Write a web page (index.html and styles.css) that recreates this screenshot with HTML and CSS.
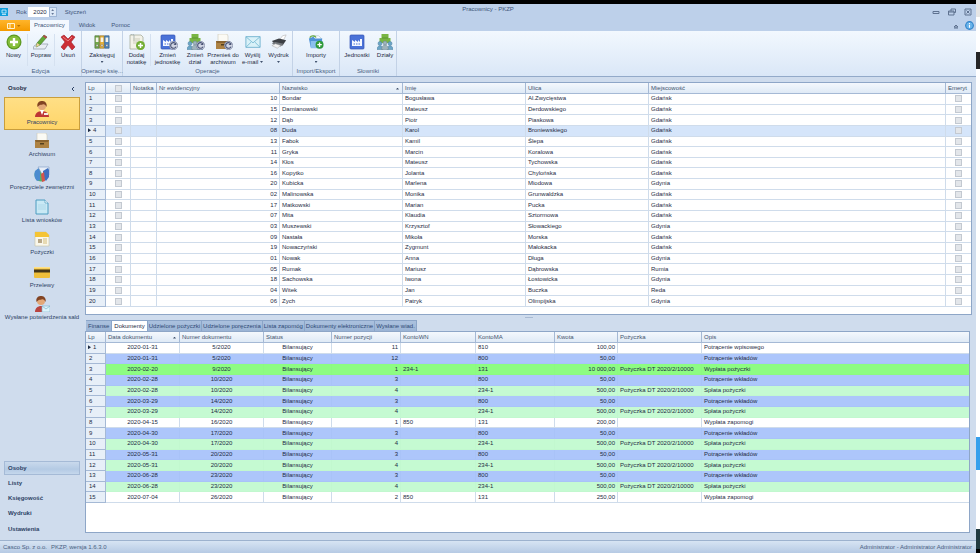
FILE: index.html
```html
<!DOCTYPE html>
<html lang="pl">
<head>
  <meta charset="UTF-8">
  <meta name="viewport" content="width=device-width, initial-scale=1.0">
  <title>Pracownicy - PKZP</title>
  <link rel="stylesheet" href="styles.css">
</head>
<body>

<!-- Icon set -->
<svg class="sprite" aria-hidden="true">
  <symbol id="i-add" viewBox="0 0 16 16"><circle cx="8" cy="8" r="7.5" fill="#5d9a22"/><circle cx="8" cy="8" r="6.2" fill="#86bf3c"/><path d="M8 4v8M4 8h8" stroke="#fff" stroke-width="2.4"/></symbol>
  <symbol id="i-edit" viewBox="0 0 16 16"><path d="M1 12l3-2h11l-3 5H0z" fill="#e8edf4" stroke="#8c99a8" stroke-width=".7"/><path d="M4 9l7-8 3 2-7 8-4 2z" fill="#62a835" stroke="#39701f" stroke-width=".6"/><path d="M11 1l3 2-1 1.5-3-2z" fill="#b9444e"/><path d="M3 13l1-4 3 2z" fill="#f0d09a"/></symbol>
  <symbol id="i-del" viewBox="0 0 16 16"><path d="M1 3l3-2 4 4 4-4 3 2-4 5 4 5-3 3-4-5-4 5-3-3 4-5z" fill="#cc2f35" stroke="#9d1f28" stroke-width=".6"/><path d="M3 3l5 4 4-4" fill="none" stroke="#ec8080"/></symbol>
  <symbol id="i-books" viewBox="0 0 18 16"><path d="M1 1h5v14H1z" fill="#73a84b" stroke="#456a36" stroke-width=".7"/><path d="M6.500 1h5v14h-5z" fill="#e5b13c" stroke="#8d6d28" stroke-width=".7"/><path d="M12 1h5v14h-5z" fill="#4e86bd" stroke="#2e557d" stroke-width=".7"/><path d="M2 3h3v5H2zM7.500 3h3v5h-3zM13 3h3v5h-3z" fill="#f6f4ea"/><g fill="#fff" stroke="#555" stroke-width=".5"><circle cx="3.500" cy="12" r="1.100"/><circle cx="9" cy="12" r="1.100"/><circle cx="14.500" cy="12" r="1.100"/></g></symbol>
  <symbol id="i-note" viewBox="0 0 16 16"><path d="M1 1h11l2 2v12H1z" fill="#f3f2e8" stroke="#a7ad9c" stroke-width=".8"/><path d="M2 1c1-2 3-1 3 1v5" fill="none" stroke="#9aa" stroke-width=".8"/><path d="M4 5h7M4 7h7M4 9h4" stroke="#cdcdbb"/><circle cx="11.500" cy="11.500" r="4.500" fill="#73ae34"/><path d="M11.500 9v5M9 11.500h5" stroke="#fff" stroke-width="1.500"/></symbol>
  <symbol id="i-unit" viewBox="0 0 16 16"><rect x="1" y="1" width="14" height="14" rx="1" fill="#4a72d8" stroke="#3555b4" stroke-width=".7"/><path d="M3 12V6l3 2V6l3 2V6l2 2V5h2v7z" fill="#f5f8ff"/><path d="M4.500 10h7" stroke="#4a72d8" stroke-dasharray="1.500 1"/></symbol>
  <symbol id="i-refresh" viewBox="0 0 16 16"><circle cx="8" cy="8" r="7.500" fill="#d0d5e3" stroke="#66708e"/><path d="M12 5a5 5 0 1 0 .5 5" fill="none" stroke="#4a5577" stroke-width="2"/><path d="M13 2v5H8z" fill="#4a5577"/></symbol>
  <symbol id="i-people" viewBox="0 0 16 16"><path d="M4.500 0h7v4h2v5h-11V4h2z" fill="#78b544"/><path d="M5 4h6" stroke="#5a9431"/><g fill="#6ba5c7" stroke="#4a7e9f" stroke-width=".5"><circle cx="3" cy="9.500" r="2"/><circle cx="13" cy="9.500" r="2"/><path d="M0 15.500c0-5 6-5 6 0zM10 15.500c0-5 6-5 6 0z"/></g><g fill="#9fb3bb" stroke="#6a8791" stroke-width=".5"><circle cx="8" cy="9" r="2"/><path d="M4.500 15.500c0-6 7-6 7 0z"/></g></symbol>
  <symbol id="i-box" viewBox="0 0 16 16"><path d="M3 0h9l1 2v6H3z" fill="#fbfaf4" stroke="#c9c6b6" stroke-width=".6"/><path d="M1 7h14v8H1z" fill="#ad8243"/><path d="M1 7h14l-1 2H2z" fill="#8a6430"/><path d="M6 10h4v1.500H6z" fill="#54401f"/></symbol>
  <symbol id="i-mail" viewBox="0 0 18 16"><path d="M1 2h16v12H1z" fill="#d9f1f8" stroke="#6eb0cd"/><path d="M1 2l8 7 8-7M1 14l6-6M17 14l-6-6" fill="none" stroke="#79bbd5"/></symbol>
  <symbol id="i-print" viewBox="0 0 18 16"><path d="M10 5l3-4 4-1-3 6z" fill="#fff" stroke="#aaa" stroke-width=".6"/><path d="M1 7l8-3 8 2-4 6-9-2z" fill="#3c3f44"/><path d="M1 9l4-1 9 2-3 3-8-2z" fill="#75797e"/><path d="M1 12l4-2 6 2-4 3z" fill="#f3f3f3" stroke="#999" stroke-width=".5"/></symbol>
  <symbol id="i-import" viewBox="0 0 18 16"><path d="M6 1h6l3 3v6H6z" fill="#f6f9ff" stroke="#8aa" stroke-width=".5"/><path d="M1 4l5-2 2 2h8l-1 10H3z" fill="#4e92d6"/><path d="M3 7h14l-2 8H3z" fill="#8bc0ee"/><path d="M2 3c2-3 6-2 7 0" fill="none" stroke="#65a943" stroke-width="1.500"/><circle cx="13" cy="11" r="4.500" fill="#2f9a39"/><path d="M13 8.500v5M10.500 11h5" stroke="#fff" stroke-width="1.500"/></symbol>
  <symbol id="i-person" viewBox="0 0 16 16"><path d="M1 16c0-8 14-8 14 0z" fill="#bd3535"/><path d="M6 9l2 5 2-5z" fill="#fff"/><circle cx="8" cy="5" r="4" fill="#e3a878"/><path d="M3.500 6c-2-8 11-8 9 0-1-2-2-3-4-2.500s-3 0-5 2.500z" fill="#824423"/><path d="M10 12h4v2h-4z" fill="#f5e9e4"/></symbol>
  <symbol id="i-chart" viewBox="0 0 16 16"><circle cx="7" cy="9" r="6.500" fill="#55b06c"/><path d="M1 5l5-4v13l-3 1C0 12 0 8 1 5z" fill="#4b8bd0"/><path d="M4 1h11v8l-6 1z" fill="#e7eef8" stroke="#7899c2" stroke-width=".6"/><path d="M9 5l5-3 1 2v7l-3 4-3-3z" fill="#3d6fc0"/><path d="M7 8l3-2 1 9-3 1z" fill="#d3554b"/></symbol>
  <symbol id="i-page" viewBox="0 0 16 16"><path d="M2 1h9l3 3v11H2z" fill="#c9e9f5" stroke="#4c9cc0"/><path d="M11 1v3h3" fill="#fff" stroke="#4c9cc0" stroke-width=".7"/><path d="M4 6h8M4 8h8M4 10h8" stroke="#a3d2e5" stroke-width=".7"/></symbol>
  <symbol id="i-loan" viewBox="0 0 16 16"><path d="M1 1h11l3 3v11H1z" fill="#f9f7ec" stroke="#c6c2a5" stroke-width=".6"/><path d="M1 1h11l3 3v2H1z" fill="#f5c434"/><path d="M4 8h4v4H4z" fill="#b9a98a"/><path d="M9 8h4M9 10h4M9 12h4" stroke="#d5bd7a"/></symbol>
  <symbol id="i-card" viewBox="0 0 16 16"><rect x="0" y="3" width="16" height="11" rx="1" fill="#efbf3a"/><path d="M0 5.500h16v3H0z" fill="#453718"/><path d="M0 3h16v1.500H0z" fill="#ffe189"/></symbol>
  <symbol id="i-send" viewBox="0 0 16 16"><path d="M1 16c0-8 12-8 12 0z" fill="#b94440"/><circle cx="7" cy="5" r="4" fill="#e3a878"/><path d="M2.500 6c-2-8 11-8 9 0-1-2-2-3-4-2.500s-3 0-5 2.500z" fill="#824423"/><path d="M8 10h8v6H8z" fill="#ddf3fa" stroke="#7db4cd" stroke-width=".6"/><path d="M8 10l4 3 4-3" fill="none" stroke="#7db4cd" stroke-width=".7"/></symbol>
</svg>

<div class="screen">
  <div class="app">
    <header class="titlebar">
      <svg class="logo" viewBox="0 0 8 8" aria-hidden="true"><path d="M0 0h8v8H0z" fill="#109ddb"/><path d="M2 2h4v3H2zM2 6.500h4" fill="none" stroke="#d6f1ff" stroke-width=".8"/></svg>
      <label for="year">Rok</label>
      <div class="spinner">
        <input id="year" type="text" value="2020">
        <div class="arrows">
          <button aria-label="Następny rok"><svg viewBox="0 0 4 3"><path d="M2 1l1 1H1z"/></svg></button>
          <button aria-label="Poprzedni rok"><svg viewBox="0 0 4 3"><path d="M1 1h2L2 2z"/></svg></button>
        </div>
      </div>
      <span class="month">Styczeń</span>
      <h1>Pracownicy - PKZP</h1>
      <div class="window-buttons">
        <button aria-label="Minimalizuj"><svg viewBox="0 0 8 8"><path d="M1 3.500h6v2H1z"/></svg></button>
        <button aria-label="Przywróć"><svg viewBox="0 0 8 8"><path d="M3 3V1h4.500v3.500H6M.5 3H6v4H.5zM.5 4H6"/></svg></button>
        <button aria-label="Zamknij"><svg viewBox="0 0 8 8"><path d="M1 1h6v6H1zM2.500 2.500l3 3M5.500 2.500l-3 3"/></svg></button>
      </div>
    </header>

    <nav class="menu">
      <button class="file-menu" aria-label="Menu"><svg viewBox="0 0 14 6"><path d="M.5.500h7v5h-7zM3 .5v5" fill="none" stroke="#fff2cf"/><path d="M10 2h3.500l-1.700 2z" fill="#b87408"/></svg></button>
      <button class="active">Pracownicy</button>
      <button>Widok</button>
      <button>Pomoc</button>
      <div class="menu-right">
        <button aria-label="Zwiń wstążkę"><svg viewBox="0 0 8 8"><path d="M2 5l2-2 2 2zM2 6h4"/></svg></button>
        <button aria-label="Informacje"><svg class="info" viewBox="0 0 8 8"><circle cx="4" cy="4" r="3.900" fill="#2f82c9"/><circle cx="4" cy="4" r="2.900" fill="#69b3ea"/><path d="M4 3.300v2.700M4 1.700v.9" stroke="#fff"/></svg></button>
      </div>
    </nav>

    <section class="ribbon">
      <div class="group">
        <div class="tools">
          <button class="tool w-m"><svg><use href="#i-add"/></svg><span>Nowy</span></button>
          <button class="tool w-m line"><svg><use href="#i-edit"/></svg><span>Popraw</span></button>
          <button class="tool w-m line"><svg><use href="#i-del"/></svg><span>Usuń</span></button>
        </div>
        <div class="caption">Edycja</div>
      </div>
      <div class="group">
        <div class="tools">
          <button class="tool w-xl"><svg><use href="#i-books"/></svg><span>Zaksięguj</span><i class="drop"></i></button>
        </div>
        <div class="caption tight">Operacje księ...</div>
      </div>
      <div class="group">
        <div class="tools">
          <button class="tool w-m"><svg><use href="#i-note"/></svg><span>Dodaj<br>notatkę</span></button>
          <button class="tool w-l line"><svg><use href="#i-unit"/></svg><svg class="over"><use href="#i-refresh"/></svg><span>Zmień<br>jednostkę</span></button>
          <button class="tool w-xs"><svg><use href="#i-people"/></svg><svg class="over"><use href="#i-refresh"/></svg><span>Zmień<br>dział</span></button>
          <button class="tool w-l"><svg><use href="#i-box"/></svg><svg class="over"><use href="#i-refresh"/></svg><span>Przenieś do<br>archiwum</span></button>
          <button class="tool w-s"><svg><use href="#i-mail"/></svg><span>Wyślij<br>e-mail <i class="drop inline"></i></span></button>
          <button class="tool w-m"><svg><use href="#i-print"/></svg><span>Wydruk</span><i class="drop"></i></button>
        </div>
        <div class="caption">Operacje</div>
      </div>
      <div class="group">
        <div class="tools">
          <button class="tool w-xxl"><svg><use href="#i-import"/></svg><span>Importy</span><i class="drop"></i></button>
        </div>
        <div class="caption">Import/Eksport</div>
      </div>
      <div class="group">
        <div class="tools">
          <button class="tool w-l"><svg><use href="#i-unit"/></svg><span>Jednostki</span></button>
          <button class="tool w-xs"><svg><use href="#i-people"/></svg><span>Działy</span></button>
        </div>
        <div class="caption">Słowniki</div>
      </div>
    </section>

    <main>
      <aside class="sidebar">
        <h2>Osoby <button aria-label="Zwiń panel"><svg viewBox="0 0 4 6"><path d="M3 1L1 3l2 2" fill="none" stroke="#2d4265"/></svg></button></h2>
        <div class="shortcuts">
          <button class="selected"><svg><use href="#i-person"/></svg>Pracownicy</button>
          <button><svg><use href="#i-box"/></svg>Archiwum</button>
          <button><svg><use href="#i-chart"/></svg>Poręczyciele zewnętrzni</button>
          <button><svg><use href="#i-page"/></svg>Lista wniosków</button>
          <button><svg><use href="#i-loan"/></svg>Pożyczki</button>
          <button><svg><use href="#i-card"/></svg>Przelewy</button>
          <button><svg><use href="#i-send"/></svg>Wysłane potwierdzenia sald</button>
        </div>
        <div class="sections">
          <button class="selected">Osoby</button>
          <button>Listy</button>
          <button>Księgowość</button>
          <button>Wydruki</button>
          <button>Ustawienia</button>
        </div>
      </aside>

      <div class="content">
        <section class="panel people">
          <table>
            <colgroup><col class="c-lp"><col class="c-check"><col class="c-note"><col class="c-text"><col class="c-text"><col class="c-text"><col class="c-text"><col><col class="c-check"></colgroup>
            <thead>
              <tr><th>Lp</th><th class="check"><input type="checkbox" aria-label="Zaznacz wszystkich"></th><th>Notatka</th><th>Nr ewidencyjny</th><th>Nazwisko<i class="sort"></i></th><th>Imię</th><th>Ulica</th><th>Miejscowość</th><th>Emeryt</th></tr>
            </thead>
            <tbody id="people"></tbody>
          </table>
        </section>

        <div class="splitter"></div>

        <div class="tabs">
          <button>Finanse</button>
          <button class="active">Dokumenty</button>
          <button>Udzielone pożyczki</button>
          <button>Udzielone poręczenia</button>
          <button>Lista zapomóg</button>
          <button>Dokumenty elektroniczne</button>
          <button>Wysłane wiad.</button>
        </div>

        <section class="panel documents">
          <table>
            <colgroup><col class="c-lp"><col class="c-date"><col class="c-wide"><col class="c-status"><col class="c-pos"><col class="c-wn"><col class="c-ma"><col class="c-sum"><col class="c-wide"><col></colgroup>
            <thead>
              <tr><th>Lp</th><th>Data dokumentu<i class="sort"></i></th><th>Numer dokumentu</th><th>Status</th><th>Numer pozycji</th><th>KontoWN</th><th>KontoMA</th><th>Kwota</th><th>Pożyczka</th><th>Opis</th></tr>
            </thead>
            <tbody id="documents"></tbody>
          </table>
        </section>
      </div>
    </main>

    <footer class="statusbar">
      <span>Casco Sp. z o.o.</span>
      <span>PKZP, wersja 1.6.3.0</span>
      <span class="user">Administrator - Administrator Administrator</span>
    </footer>
  </div>

  <div class="edge">
    <div class="edge-top"></div>
    <div class="edge-dark"></div>
    <div class="edge-blue"></div>
    <div class="edge-bottom"></div>
  </div>
</div>

<script src="script.js"></script>
</body>
</html>
```
FILE: styles.css
```css
* {
  box-sizing: border-box;
}

body {
  margin: 0;
  font-family: "Liberation Sans", Arial, sans-serif;
  font-size: 6px;
  line-height: 7px;
  color: #1e2c44;
  background: #000;
}

button,
input {
  margin: 0;
  padding: 0;
  border: 0;
  background: none;
  font: inherit;
  color: inherit;
}

button {
  cursor: pointer;
  white-space: nowrap;
}

.sprite {
  display: none;
}

.screen {
  display: flex;
  height: 100vh;
}

.app {
  flex: 1;
  min-width: 0;
  display: flex;
  flex-direction: column;
  margin-top: 4px;
  background: #cfdced;
}

/* Title bar */
.titlebar {
  position: relative;
  display: flex;
  align-items: center;
  height: 16px;
  background: #bdd0ea;
  color: #40557a;
}

.logo {
  width: 8px;
  height: 8px;
  margin-right: 8px;
}

.spinner {
  display: flex;
  height: 10px;
  margin: 0 8px 0 1px;
}

.spinner input {
  width: 21px;
  padding-right: 2px;
  background: #fff;
  color: #1e2c44;
  text-align: right;
}

.arrows {
  display: flex;
  flex-direction: column;
  width: 8px;
  border: 1px solid #9fb6d6;
  background: #dce8f7;
}

.arrows button {
  height: 4px;
}

.arrows svg {
  display: block;
  height: 4px;
  margin: 0 auto;
  fill: #40557a;
}

h1 {
  position: absolute;
  left: 0;
  right: 0;
  top: 2px;
  margin: 0;
  font-size: 6px;
  font-weight: normal;
  text-align: center;
  pointer-events: none;
}

.window-buttons {
  display: flex;
  gap: 8px;
  margin-left: auto;
  padding-right: 4px;
}

.window-buttons svg,
.menu-right svg {
  display: block;
  width: 8px;
  height: 8px;
  fill: none;
}

.window-buttons path,
.menu-right path {
  stroke: #5f7290;
  stroke-width: 1;
}

/* Menu */
.menu {
  display: flex;
  height: 11px;
  background: #bdd0ea;
  color: #40557a;
}

.menu button {
  padding: 0 8px;
}

.menu .file-menu {
  width: 30px;
  padding: 0 7px;
  background: linear-gradient(#ffb52b, #f49a00);
}

.file-menu svg {
  display: block;
  height: 6px;
}

.menu .active {
  padding: 0 4px;
  margin-right: 2px;
  background: #f3f8fe;
}

.menu-right {
  display: flex;
  align-items: center;
  gap: 5px;
  margin-left: auto;
  padding-right: 2px;
}

.menu .menu-right button {
  padding: 0;
}

.menu-right .info {
  width: 9px;
  height: 9px;
}

.menu-right .info path {
  stroke: #fff;
}

/* Ribbon */
.ribbon {
  display: flex;
  height: 46px;
  border-bottom: 1px solid #93aac9;
  background: linear-gradient(#f2f8fe, #dae7f7);
}

.group {
  display: flex;
  flex-direction: column;
  justify-content: space-between;
  border-right: 1px solid #c3d2e6;
}

.tools {
  display: flex;
  padding-top: 3px;
}

.tool {
  position: relative;
  display: flex;
  flex-direction: column;
  align-items: center;
  justify-content: flex-start;
  height: 32px;
  text-align: center;
}

.tool svg {
  flex: none;
  width: 16px;
  height: 16px;
  margin-bottom: 2px;
}

.tool .over {
  position: absolute;
  left: calc(50% + 1px);
  top: 7px;
  width: 9px;
  height: 9px;
}

.tool.line {
  border-left: 1px solid #d5e1f0;
}

.w-xs { width: 22px; }
.w-s { width: 25px; }
.w-m { width: 27px; }
.w-l { width: 34px; }
.w-xl { width: 40px; }
.w-xxl { width: 46px; }

.drop,
.sort {
  display: block;
  width: 3px;
  height: 2px;
  margin-top: 2px;
  background: #42536e;
  clip-path: polygon(0 0, 100% 0, 50% 100%);
}

.drop.inline {
  display: inline-block;
  margin: 0 0 1px;
}

.caption {
  padding-bottom: 1px;
  color: #4a5f82;
  text-align: center;
  white-space: nowrap;
}

.caption.tight {
  margin: 0 -2px;
}

/* Main area */
main {
  flex: 1;
  min-height: 0;
  display: flex;
  padding: 5px 4px 0;
}

.sidebar {
  display: flex;
  flex-direction: column;
  width: 76px;
  margin-right: 5px;
}

.sidebar h2 {
  display: flex;
  justify-content: space-between;
  margin: 0;
  padding: 3px 5px 5px 4px;
  font-size: 6px;
}

.sidebar h2 svg {
  display: block;
  width: 4px;
  height: 6px;
}

.sidebar button {
  color: #2d4265;
}

.shortcuts {
  display: flex;
  flex-direction: column;
  height: 228px;
}

.shortcuts button {
  flex: 1;
  display: flex;
  flex-direction: column;
  align-items: center;
  justify-content: center;
  gap: 2px;
  border: 1px solid transparent;
}

.shortcuts svg {
  width: 16px;
  height: 16px;
}

.shortcuts .selected {
  border-color: #c99e3c;
  background: linear-gradient(#ffdf86, #ffd568);
}

.sections {
  display: flex;
  flex-direction: column;
  justify-content: space-between;
  height: 75px;
  margin: auto 0 4px;
}

.sections button {
  height: 14px;
  padding-left: 3px;
  border: 1px solid transparent;
  font-weight: bold;
  text-align: left;
}

.sections .selected {
  border-color: #a5bad6;
  background: linear-gradient(#c9d9ec, #b4cae4 60%, #c5d7ec);
}

.content {
  flex: 1;
  min-width: 0;
  display: flex;
  flex-direction: column;
}

.panel {
  border: 1px solid #8ea6c7;
  background: #fff;
}

.people {
  padding-bottom: 7px;
}

.documents {
  flex: 1;
  margin: 0 2px 7px 0;
}

.splitter {
  width: 8px;
  height: 1px;
  margin: 2px auto;
  background: #a9bad2;
}

/* Tabs */
.tabs {
  display: flex;
  height: 11px;
  padding-left: 1px;
}

.tabs button {
  padding: 0 1px;
  border: 1px solid #8ba5c8;
  border-width: 1px 1px 0 0;
  background: linear-gradient(#abc1de, #9bb4d5);
  color: #2f4a75;
}

.tabs button:first-child,
.tabs .active {
  padding: 0 2px;
}

.tabs .active {
  background: #fff;
  color: #1e2c44;
}

/* Tables */
table {
  width: 100%;
  table-layout: fixed;
  border-collapse: separate;
  border-spacing: 0;
}

.people table {
  height: 224px;
}

.documents table {
  height: 171px;
}

.c-lp { width: 20px; }
.c-check { width: 25px; }
.c-note { width: 26px; }
.c-text { width: 123px; }
.c-date { width: 74px; }
.c-wide { width: 84px; }
.c-status { width: 68px; }
.c-pos { width: 69px; }
.c-wn { width: 75px; }
.c-ma { width: 79px; }
.c-sum { width: 63px; }

th,
td {
  padding: 0 2px;
  border-right: 1px solid #cfdceb;
  border-bottom: 1px solid #cfdceb;
  line-height: 7px;
  text-align: left;
  white-space: nowrap;
  overflow: hidden;
}

th {
  height: 11px;
  border-color: #a5b9d5;
  background: linear-gradient(#f4f8fd, #dfeaf6);
  color: #44546e;
  font-weight: normal;
}

td:first-child {
  padding-left: 3px;
  border-color: #a5b9d5;
  background: #e7eff8;
}

td.current {
  padding-left: 2px;
}

th:last-child,
td:last-child {
  border-right: 0;
}

.sort {
  float: right;
  margin: 3px 1px 0 0;
  clip-path: polygon(50% 0, 100% 100%, 0 100%);
}

.marker {
  display: inline-block;
  width: 3px;
  height: 4px;
  margin-right: 2px;
  background: #1e2c44;
  clip-path: polygon(0 0, 100% 50%, 0 100%);
}

.num {
  text-align: right;
}

.center,
.check {
  text-align: center;
}

.check input {
  appearance: none;
  display: block;
  width: 7px;
  height: 7px;
  margin: 0 auto;
  border: 1px solid #c3c9d1;
  background: #e3e6ea;
}

.selected-row td:not(:first-child) {
  background: #d5e5fa;
}

.documents .blue td:not(:first-child) {
  border-color: #a9c3f8;
  background: #adc6fb;
}

.documents .green td:not(:first-child) {
  border-color: #8cf981;
  background: #8dfc82;
}

.documents .mint td:not(:first-child) {
  border-color: #c2f8cf;
  background: #c5fad2;
}

/* Status bar */
.statusbar {
  display: flex;
  align-items: center;
  gap: 4px;
  height: 13px;
  padding: 0 4px 0 3px;
  border-top: 1px solid #9db2ce;
  background: linear-gradient(#d7e4f3, #b6cae4);
  color: #4a5f82;
}

.user {
  margin-left: auto;
}

/* Strip at the right edge of the screen */
.edge {
  display: flex;
  flex-direction: column;
  width: 4px;
  background: #fff;
}

.edge-top {
  height: 17px;
  background: #e6e6e6;
}

.edge-dark {
  height: 17px;
  margin-top: 35px;
  background: #262626;
}

.edge-blue {
  height: 33px;
  margin: auto 0 59px;
  background: #36a0ec;
}

.edge-bottom {
  height: 24px;
  border-bottom: 4px solid #000;
  background: #223b40;
}
```
FILE: script.js
```js
const people = [
  ["10", "Bondar", "Bogusława", "Al.Zwycięstwa", "Gdańsk"],
  ["15", "Damianowski", "Mateusz", "Derdowskiego", "Gdańsk"],
  ["12", "Dąb", "Piotr", "Piaskowa", "Gdańsk"],
  ["08", "Duda", "Karol", "Broniewskiego", "Gdańsk"],
  ["13", "Fabok", "Kamil", "Ślepa", "Gdańsk"],
  ["11", "Gryka", "Marcin", "Koralowa", "Gdańsk"],
  ["14", "Kłos", "Mateusz", "Tychowska", "Gdańsk"],
  ["16", "Kopytko", "Jolanta", "Chylońska", "Gdańsk"],
  ["20", "Kubicka", "Marlena", "Miodowa", "Gdynia"],
  ["02", "Malinowska", "Monika", "Grunwaldzka", "Gdańsk"],
  ["17", "Matkowski", "Marian", "Pucka", "Gdańsk"],
  ["07", "Mita", "Klaudia", "Sztormowa", "Gdańsk"],
  ["03", "Muszewski", "Krzysztof", "Słowackiego", "Gdynia"],
  ["09", "Nastała", "Mikoła", "Morska", "Gdańsk"],
  ["19", "Nowaczyński", "Zygmunt", "Małokacka", "Gdańsk"],
  ["01", "Nowak", "Anna", "Długa", "Gdynia"],
  ["05", "Rumak", "Mariusz", "Dąbrowska", "Rumia"],
  ["18", "Sachowska", "Iwona", "Łostowicka", "Gdynia"],
  ["04", "Witek", "Jan", "Buczka", "Reda"],
  ["06", "Zych", "Patryk", "Olimpijska", "Gdynia"]
];

const loan = "Pożyczka DT 2020/2/10000";

// row colour, date, number, position, KontoWN, KontoMA, amount, loan, description
const documents = [
  ["", "2020-01-31", "5/2020", "11", "", "810", "100,00", "", "Potrącenie wpisowego"],
  ["blue", "2020-01-31", "5/2020", "12", "", "800", "50,00", "", "Potrącenie wkładów"],
  ["green", "2020-02-20", "9/2020", "1", "234-1", "131", "10 000,00", loan, "Wypłata pożyczki"],
  ["blue", "2020-02-28", "10/2020", "3", "", "800", "50,00", "", "Potrącenie wkładów"],
  ["mint", "2020-02-28", "10/2020", "4", "", "234-1", "500,00", loan, "Spłata pożyczki"],
  ["blue", "2020-03-29", "14/2020", "3", "", "800", "50,00", "", "Potrącenie wkładów"],
  ["mint", "2020-03-29", "14/2020", "4", "", "234-1", "500,00", loan, "Spłata pożyczki"],
  ["", "2020-04-15", "16/2020", "1", "850", "131", "200,00", "", "Wypłata zapomogi"],
  ["blue", "2020-04-30", "17/2020", "3", "", "800", "50,00", "", "Potrącenie wkładów"],
  ["mint", "2020-04-30", "17/2020", "4", "", "234-1", "500,00", loan, "Spłata pożyczki"],
  ["blue", "2020-05-31", "20/2020", "3", "", "800", "50,00", "", "Potrącenie wkładów"],
  ["mint", "2020-05-31", "20/2020", "4", "", "234-1", "500,00", loan, "Spłata pożyczki"],
  ["blue", "2020-06-28", "23/2020", "3", "", "800", "50,00", "", "Potrącenie wkładów"],
  ["mint", "2020-06-28", "23/2020", "4", "", "234-1", "500,00", loan, "Spłata pożyczki"],
  ["", "2020-07-04", "26/2020", "2", "850", "131", "250,00", "", "Wypłata zapomogi"]
];

function lpCell(i, current) {
  return i === current
    ? `<td class="current"><i class="marker"></i>${i + 1}</td>`
    : `<td>${i + 1}</td>`;
}

document.getElementById("people").innerHTML = people.map((p, i) => `
  <tr class="${i === 3 ? "selected-row" : ""}">
    ${lpCell(i, 3)}
    <td class="check"><input type="checkbox" aria-label="Zaznacz: ${p[1]}"></td>
    <td></td>
    <td class="num">${p[0]}</td>
    <td>${p[1]}</td><td>${p[2]}</td><td>${p[3]}</td><td>${p[4]}</td>
    <td class="check"><input type="checkbox" aria-label="Emeryt: ${p[1]}"></td>
  </tr>`).join("");

document.getElementById("documents").innerHTML = documents.map((d, i) => `
  <tr class="${d[0]}">
    ${lpCell(i, 0)}
    <td class="center">${d[1]}</td>
    <td class="center">${d[2]}</td>
    <td class="center">Bilansujący</td>
    <td class="num">${d[3]}</td>
    <td>${d[4]}</td><td>${d[5]}</td>
    <td class="num">${d[6]}</td>
    <td>${d[7]}</td><td>${d[8]}</td>
  </tr>`).join("");

// Year spinner
const year = document.getElementById("year");
const [up, down] = document.querySelectorAll(".arrows button");
up.onclick = () => year.value++;
down.onclick = () => year.value--;
```
